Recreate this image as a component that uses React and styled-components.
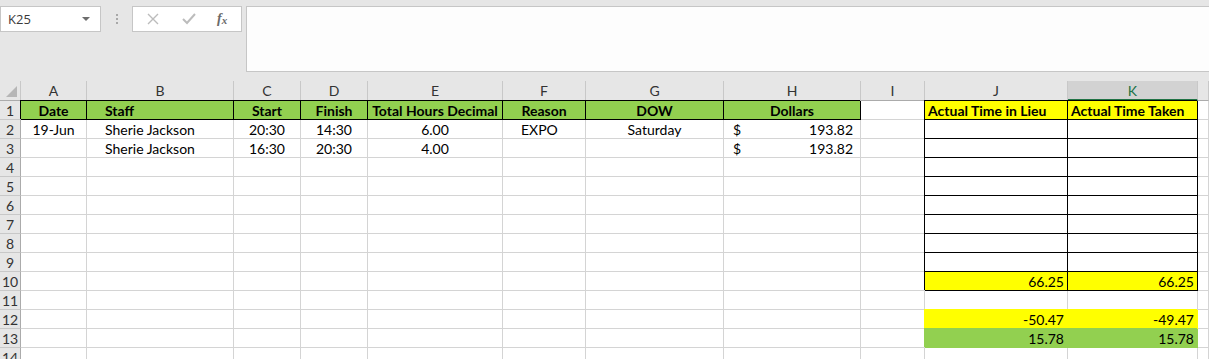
import React from "react";
import styled, { createGlobalStyle } from "styled-components";

const GREEN = "#92d050";
const YELLOW = "#ffff00";
const GRID = "#d4d4d4";

const widths = [21, 66, 147, 67, 67, 135, 83, 138, 137, 64, 143, 130];
const letters = ["A", "B", "C", "D", "E", "F", "G", "H", "I", "J", "K", "L"];

// each row: map of column letter -> cell spec
const rows = [
  {
    A: { text: "Date", fill: GREEN, box: true, bold: true },
    B: { text: "Staff", fill: GREEN, box: true, bold: true, align: "indent" },
    C: { text: "Start", fill: GREEN, box: true, bold: true },
    D: { text: "Finish", fill: GREEN, box: true, bold: true },
    E: { text: "Total Hours Decimal", fill: GREEN, box: true, bold: true },
    F: { text: "Reason", fill: GREEN, box: true, bold: true },
    G: { text: "DOW", fill: GREEN, box: true, bold: true },
    H: { text: "Dollars", fill: GREEN, box: true, bold: true },
    J: { text: "Actual Time in Lieu", fill: YELLOW, box: true, bold: true, align: "left" },
    K: { text: "Actual Time Taken", fill: YELLOW, box: true, bold: true, align: "left" },
  },
  {
    A: { text: "19-Jun" },
    B: { text: "Sherie Jackson", align: "indent" },
    C: { text: "20:30" },
    D: { text: "14:30" },
    E: { text: "6.00" },
    F: { text: "EXPO", align: "indent" },
    G: { text: "Saturday" },
    H: { money: "193.82" },
    J: { box: true },
    K: { box: true },
  },
  {
    B: { text: "Sherie Jackson", align: "indent" },
    C: { text: "16:30" },
    D: { text: "20:30" },
    E: { text: "4.00" },
    H: { money: "193.82" },
    J: { box: true },
    K: { box: true },
  },
  ...Array.from({ length: 6 }, () => ({ J: { box: true }, K: { box: true } })),
  {
    J: { text: "66.25", fill: YELLOW, box: true, align: "right" },
    K: { text: "66.25", fill: YELLOW, box: true, align: "right" },
  },
  {},
  {
    J: { text: "-50.47", fill: YELLOW, align: "right" },
    K: { text: "-49.47", fill: YELLOW, align: "right" },
  },
  {
    J: { text: "15.78", fill: GREEN, align: "right" },
    K: { text: "15.78", fill: GREEN, align: "right" },
  },
  {},
];

const App = () => {
  return (
    <Page>
      <GlobalStyle />
      <TopBar>
        <NameBox>
          <span>K25</span>
          <DropArrow />
        </NameBox>
        <Dots>
          <i />
          <i />
          <i />
        </Dots>
        <FxBox>
          <FxButton>
            <svg width="14" height="14" viewBox="0 0 14 14">
              <path d="M2 2 L12 12 M12 2 L2 12" stroke="#bcbcbc" strokeWidth="1.4" />
            </svg>
          </FxButton>
          <FxButton>
            <svg width="16" height="14" viewBox="0 0 16 14">
              <path d="M2 7 L6 11 L14 2" stroke="#bcbcbc" strokeWidth="2" fill="none" />
            </svg>
          </FxButton>
          <FxLabel>
            f<sub>x</sub>
          </FxLabel>
        </FxBox>
        <FormulaInput />
      </TopBar>

      <Sheet>
        <Corner>
          <CornerTriangle />
        </Corner>
        {letters.map((l) => (
          <ColHead key={l} $active={l === "K"}>
            {l === "L" ? "" : l}
          </ColHead>
        ))}

        {rows.map((row, r) => (
          <React.Fragment key={r}>
            <RowHead>{r + 1}</RowHead>
            {letters.map((l) => {
              const c = row[l] || {};
              return (
                <Cell
                  key={l}
                  $fill={c.fill}
                  $box={c.box}
                  $bold={c.bold}
                  $align={c.align || "center"}
                >
                  {c.money ? (
                    <Money>
                      <span>$</span>
                      <span>{c.money}</span>
                    </Money>
                  ) : (
                    c.text
                  )}
                </Cell>
              );
            })}
          </React.Fragment>
        ))}
      </Sheet>
    </Page>
  );
};

const GlobalStyle = createGlobalStyle`
  body {
    margin: 0;
    overflow: hidden;
    background: #ffffff;
  }
`;

const Page = styled.div`
  width: 1209px;
  height: 359px;
  overflow: hidden;
  font-family: Lato, "Liberation Sans", sans-serif;
`;

const TopBar = styled.div`
  height: 81px;
  box-sizing: border-box;
  background: #e6e6e6;
  display: flex;
  align-items: flex-start;
  padding-top: 6px;
`;

const NameBox = styled.div`
  width: 101px;
  height: 26px;
  box-sizing: border-box;
  border: 1px solid #c6c6c6;
  background: #ffffff;
  display: flex;
  align-items: center;
  justify-content: space-between;
  padding: 0 10px 0 7px;
  font-family: "Open Sans", "Noto Sans", sans-serif;
  font-size: 13px;
  color: #3a3a3a;
`;

const DropArrow = styled.div`
  width: 0;
  height: 0;
  border-left: 4px solid transparent;
  border-right: 4px solid transparent;
  border-top: 4px solid #6d6d6d;
`;

const Dots = styled.div`
  width: 31px;
  height: 26px;
  display: flex;
  flex-direction: column;
  align-items: center;
  justify-content: center;
  gap: 2px;
  i {
    width: 2px;
    height: 2px;
    background: #a8a8a8;
  }
`;

const FxBox = styled.div`
  width: 110px;
  height: 26px;
  box-sizing: border-box;
  border: 1px solid #c6c6c6;
  background: #ffffff;
  display: flex;
  align-items: center;
  padding-left: 12px;
  gap: 20px;
`;

const FxButton = styled.div`
  width: 16px;
  display: flex;
  justify-content: center;
`;

const FxLabel = styled.div`
  font-family: "Liberation Serif", serif;
  font-style: italic;
  font-weight: bold;
  font-size: 14px;
  color: #6a6a6a;
  sub {
    font-size: 11px;
    vertical-align: -1px;
  }
`;

const FormulaInput = styled.div`
  margin-left: 4px;
  flex: 1;
  height: 66px;
  box-sizing: border-box;
  border: 1px solid #c6c6c6;
  border-right: none;
  background: #fdfdfd;
`;

const Sheet = styled.div`
  display: grid;
  grid-template-columns: ${widths.map((w) => w + "px").join(" ")} 1fr;
  grid-template-rows: 20px;
  grid-auto-rows: 19px;
  font-size: 14px;
  color: #000000;
`;

const Corner = styled.div`
  background: #e6e6e6;
  border-right: 1px solid #c8c8c8;
  border-bottom: 1px solid #ababab;
  box-sizing: border-box;
  display: flex;
  align-items: flex-end;
  justify-content: flex-end;
  padding: 0 3px 3px 0;
`;

const CornerTriangle = styled.div`
  width: 0;
  height: 0;
  border-left: 11px solid transparent;
  border-bottom: 11px solid #b6b6b6;
`;

const ColHead = styled.div`
  box-sizing: border-box;
  background: ${(p) => (p.$active ? "#d2d2d2" : "#e6e6e6")};
  border-right: 1px solid #c8c8c8;
  border-bottom: ${(p) => (p.$active ? "2px solid #217346" : "1px solid #ababab")};
  color: ${(p) => (p.$active ? "#217346" : "#333333")};
  font-size: 14px;
  display: flex;
  align-items: center;
  justify-content: center;
`;

const RowHead = styled.div`
  box-sizing: border-box;
  background: #e6e6e6;
  border-right: 1px solid #ababab;
  border-bottom: 1px solid #c8c8c8;
  color: #333333;
  font-size: 14px;
  display: flex;
  align-items: center;
  justify-content: center;
`;

const edge = (p) => (p.$box ? "#000000" : p.$fill ? p.$fill : GRID);

const Cell = styled.div`
  box-sizing: border-box;
  background: ${(p) => p.$fill || "#ffffff"};
  border-right: 1px solid ${edge};
  border-bottom: 1px solid ${edge};
  box-shadow: ${(p) =>
    p.$box || p.$fill ? `-1px -1px 0 ${edge(p)}` : "none"};
  font-weight: ${(p) => (p.$bold ? 700 : 400)};
  white-space: nowrap;
  overflow: hidden;
  display: flex;
  align-items: center;
  padding-top: 1px;
  justify-content: ${(p) =>
    p.$align === "right" ? "flex-end" : p.$align === "center" ? "center" : "flex-start"};
  padding-left: ${(p) => (p.$align === "indent" ? "18px" : "3px")};
  padding-right: 3px;
`;

const Money = styled.div`
  flex: 1;
  display: flex;
  justify-content: space-between;
  padding: 0 4px 0 6px;
`;

export default App;
